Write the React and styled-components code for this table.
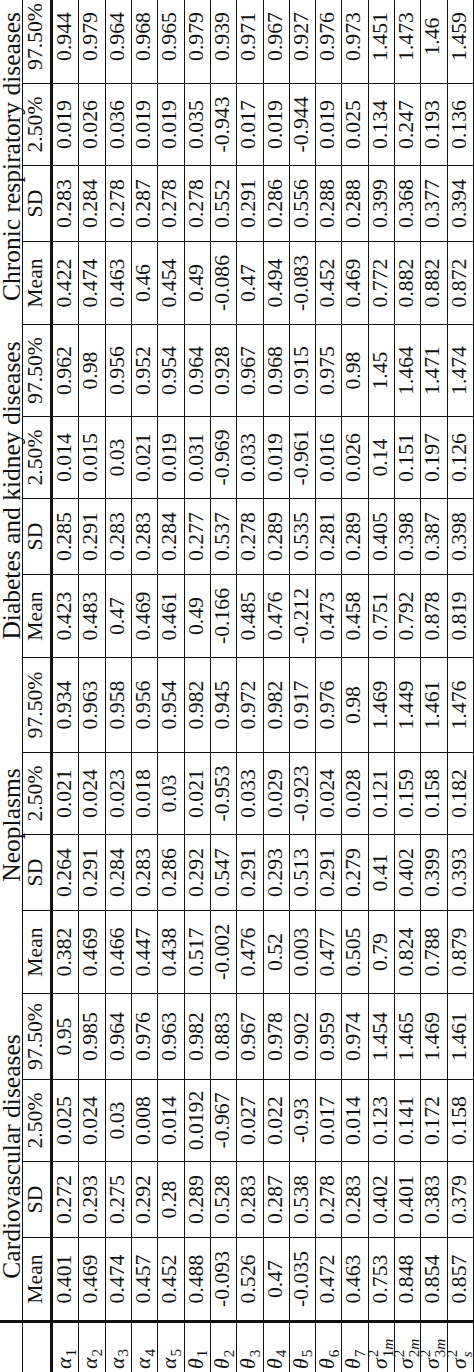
import React, { Fragment } from "react";
import styled, { createGlobalStyle } from "styled-components";

const GlobalStyle = createGlobalStyle`
  html, body {
    margin: 0;
    padding: 0;
    background: #fff;
  }
`;

const widths = [62, 83, 76, 82, 86, 83, 76, 82, 95, 83, 76, 82, 92, 83, 76, 82, 94];

const groups = [
  {
    name: "Cardiovascular diseases",
    rows: [
      ["0.401", "0.272", "0.025", "0.95"],
      ["0.469", "0.293", "0.024", "0.985"],
      ["0.474", "0.275", "0.03", "0.964"],
      ["0.457", "0.292", "0.008", "0.976"],
      ["0.452", "0.28", "0.014", "0.963"],
      ["0.488", "0.289", "0.0192", "0.982"],
      ["-0.093", "0.528", "-0.967", "0.883"],
      ["0.526", "0.283", "0.027", "0.967"],
      ["0.47", "0.287", "0.022", "0.978"],
      ["-0.035", "0.538", "-0.93", "0.902"],
      ["0.472", "0.278", "0.017", "0.959"],
      ["0.463", "0.283", "0.014", "0.974"],
      ["0.753", "0.402", "0.123", "1.454"],
      ["0.848", "0.401", "0.141", "1.465"],
      ["0.854", "0.383", "0.172", "1.469"],
      ["0.857", "0.379", "0.158", "1.461"],
    ],
  },
  {
    name: "Neoplasms",
    rows: [
      ["0.382", "0.264", "0.021", "0.934"],
      ["0.469", "0.291", "0.024", "0.963"],
      ["0.466", "0.284", "0.023", "0.958"],
      ["0.447", "0.283", "0.018", "0.956"],
      ["0.438", "0.286", "0.03", "0.954"],
      ["0.517", "0.292", "0.021", "0.982"],
      ["-0.002", "0.547", "-0.953", "0.945"],
      ["0.476", "0.291", "0.033", "0.972"],
      ["0.52", "0.293", "0.029", "0.982"],
      ["0.003", "0.513", "-0.923", "0.917"],
      ["0.477", "0.291", "0.024", "0.976"],
      ["0.505", "0.279", "0.028", "0.98"],
      ["0.79", "0.41", "0.121", "1.469"],
      ["0.824", "0.402", "0.159", "1.449"],
      ["0.788", "0.399", "0.158", "1.461"],
      ["0.879", "0.393", "0.182", "1.476"],
    ],
  },
  {
    name: "Diabetes and kidney diseases",
    rows: [
      ["0.423", "0.285", "0.014", "0.962"],
      ["0.483", "0.291", "0.015", "0.98"],
      ["0.47", "0.283", "0.03", "0.956"],
      ["0.469", "0.283", "0.021", "0.952"],
      ["0.461", "0.284", "0.019", "0.954"],
      ["0.49", "0.277", "0.031", "0.964"],
      ["-0.166", "0.537", "-0.969", "0.928"],
      ["0.485", "0.278", "0.033", "0.967"],
      ["0.476", "0.289", "0.019", "0.968"],
      ["-0.212", "0.535", "-0.961", "0.915"],
      ["0.473", "0.281", "0.016", "0.975"],
      ["0.458", "0.289", "0.026", "0.98"],
      ["0.751", "0.405", "0.14", "1.45"],
      ["0.792", "0.398", "0.151", "1.464"],
      ["0.878", "0.387", "0.197", "1.471"],
      ["0.819", "0.398", "0.126", "1.474"],
    ],
  },
  {
    name: "Chronic respiratory diseases",
    rows: [
      ["0.422", "0.283", "0.019", "0.944"],
      ["0.474", "0.284", "0.026", "0.979"],
      ["0.463", "0.278", "0.036", "0.964"],
      ["0.46", "0.287", "0.019", "0.968"],
      ["0.454", "0.278", "0.019", "0.965"],
      ["0.49", "0.278", "0.035", "0.979"],
      ["-0.086", "0.552", "-0.943", "0.939"],
      ["0.47", "0.291", "0.017", "0.971"],
      ["0.494", "0.286", "0.019", "0.967"],
      ["-0.083", "0.556", "-0.944", "0.927"],
      ["0.452", "0.288", "0.019", "0.976"],
      ["0.469", "0.288", "0.025", "0.973"],
      ["0.772", "0.399", "0.134", "1.451"],
      ["0.882", "0.368", "0.247", "1.473"],
      ["0.882", "0.377", "0.193", "1.46"],
      ["0.872", "0.394", "0.136", "1.459"],
    ],
  },
];

const params = [
  { sym: "α", sub: "1" },
  { sym: "α", sub: "2" },
  { sym: "α", sub: "3" },
  { sym: "α", sub: "4" },
  { sym: "α", sub: "5" },
  { sym: "θ", sub: "1" },
  { sym: "θ", sub: "2" },
  { sym: "θ", sub: "3" },
  { sym: "θ", sub: "4" },
  { sym: "θ", sub: "5" },
  { sym: "θ", sub: "6" },
  { sym: "θ", sub: "7" },
  { sym: "σ", sup: "2", sub: "1", subVar: "m" },
  { sym: "σ", sup: "2", sub: "2", subVar: "m" },
  { sym: "σ", sup: "2", sub: "3", subVar: "m" },
  { sym: "σ", sup: "2", subVar: "s" },
];

const stats = ["Mean", "SD", "2.50%", "97.50%"];

const Page = styled.div`
  width: 474px;
  height: 1372px;
  overflow: hidden;
  background: #fff;
`;

// the whole table is printed sideways, so it is built upright and turned
const Sideways = styled.div`
  width: ${widths.reduce((a, b) => a + b, 0)}px;
  transform-origin: 0 0;
  transform: translate(-4px, 1382px) rotate(-90deg);
  font-family: "Liberation Serif", "Times New Roman", serif;
  color: #111;
`;

const Table = styled.div`
  display: grid;
  grid-template-columns: ${widths.map((w) => `${w}px`).join(" ")};
  grid-template-rows: 26.7px 30.5px repeat(16, 26.3px);
`;

const GroupHead = styled.div`
  grid-column: span 4;
  box-sizing: border-box;
  border-bottom: 1px solid #111;
  padding-top: 2.5px;
  font-size: 25.5px;
  line-height: 26.7px;
  text-align: center;
  white-space: nowrap;
`;

const ColHead = styled.div`
  box-sizing: border-box;
  border-right: 1px solid #111;
  border-bottom: 3px solid #111;
  font-size: 21.7px;
  line-height: 24px;
  text-align: center;
  white-space: nowrap;
`;

const Cell = styled.div`
  box-sizing: border-box;
  border-right: 1px solid #111;
  border-bottom: 1px solid #111;
  font-size: 21.7px;
  line-height: 22px;
  text-align: center;
  white-space: nowrap;
`;

const Label = styled.div`
  box-sizing: border-box;
  border-right: 3px solid #111;
  border-bottom: ${({ $thick }) => ($thick ? 3 : 1)}px solid #111;
  padding-left: 13px;
  font-size: 21.7px;
  line-height: 22px;
  white-space: nowrap;
`;

const Sym = styled.i`
  font-style: italic;
`;

const Sub = styled.span`
  font-size: 0.7em;
  vertical-align: -0.3em;
  margin-left: 1px;
`;

// superscript and subscript stacked on one another, as in sigma^2_{1m}
const Scripts = styled.span`
  display: inline-block;
  margin-left: 1px;
  font-size: 0.7em;
  line-height: 0;
  vertical-align: baseline;
`;

const Script = styled.span`
  display: block;
  transform: translateY(${({ $up }) => ($up ? "-0.6em" : "0.42em")});
`;

const Var = styled.i`
  font-style: italic;
`;

const Param = ({ sym, sub, sup, subVar }) => {
  const lower = (
    <>
      {sub}
      {subVar && <Var>{subVar}</Var>}
    </>
  );
  return (
    <>
      <Sym>{sym}</Sym>
      {sup ? (
        <Scripts>
          <Script $up>{sup}</Script>
          <Script>{lower}</Script>
        </Scripts>
      ) : (
        <Sub>{lower}</Sub>
      )}
    </>
  );
};

const App = () => {
  return (
    <Page>
      <GlobalStyle />
      <Sideways>
        <Table>
          <Label />
          {groups.map((g) => (
            <GroupHead key={g.name}>{g.name}</GroupHead>
          ))}

          <Label $thick />
          {groups.map((g) =>
            stats.map((s) => <ColHead key={g.name + s}>{s}</ColHead>)
          )}

          {params.map((p, i) => (
            <Fragment key={i}>
              <Label>
                <Param {...p} />
              </Label>
              {groups.map((g) =>
                g.rows[i].map((v, j) => <Cell key={g.name + j}>{v}</Cell>)
              )}
            </Fragment>
          ))}
        </Table>
      </Sideways>
    </Page>
  );
};

export default App;
